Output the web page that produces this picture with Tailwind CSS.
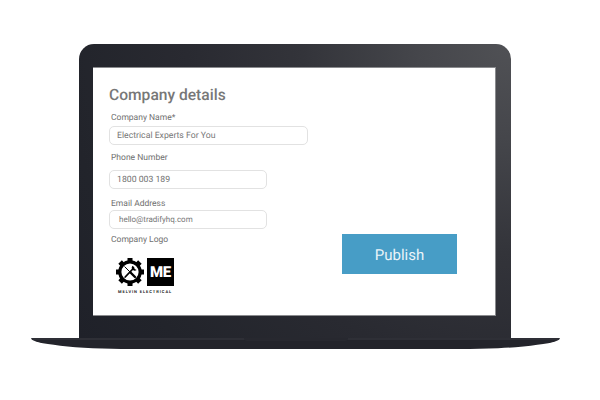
<!DOCTYPE html>
<html lang="en">
<head>
  <meta charset="UTF-8">
  <title>Company details</title>
  <script src="https://cdn.jsdelivr.net/npm/@tailwindcss/browser@4"></script>
</head>
<body class="bg-white">
  <div class="w-[600px] h-[400px] overflow-hidden bg-white pt-[44px] pl-[31px] font-['Roboto',sans-serif] [text-rendering:geometricPrecision]">
    <!-- laptop lid -->
    <div class="ml-[48px] w-[432px] h-[294px] rounded-t-[15px] pt-[23px] pl-[14px] bg-[radial-gradient(circle_at_100%_0%,#505155_0%,#45464b_18%,#33343a_40%,#292a31_62%,#22242b_85%,#1f2129_100%)]">
      <div class="w-[403px] h-[249px] bg-white border-t border-b border-r border-[#8a8b8e] flex">
        <!-- form -->
        <div class="w-[249px] pl-[16px] pt-[17px] shrink-0">
          <h1 class="text-[15.6px] leading-[20px] font-medium text-[#777]">Company details</h1>
          <p class="mt-[7px] ml-[2px] text-[8.5px] leading-[12px] text-[#6f6f6f]">Company Name*</p>
          <div class="mt-[2px] w-[199px] h-[19px] rounded-[5px] border border-[#e2e2e2] pl-[7px] text-[8.7px] leading-[18px] text-[#777]">Electrical Experts For You</div>
          <p class="mt-[7px] ml-[2px] text-[8.5px] leading-[12px] text-[#6f6f6f]">Phone Number</p>
          <div class="mt-[6px] w-[158px] h-[19px] rounded-[5px] border border-[#e2e2e2] pl-[7px] text-[8.7px] leading-[19px] text-[#6f6f6f]">1800 003 189</div>
          <p class="mt-[9px] ml-[2px] text-[8.5px] leading-[12px] text-[#6f6f6f]">Email Address</p>
          <div class="w-[158px] h-[19px] rounded-[5px] border border-[#e2e2e2] pl-[9px] text-[8px] leading-[18px] text-[#777]">hello@tradifyhq.com</div>
          <p class="mt-[5px] ml-[2px] text-[8.5px] leading-[12px] text-[#6f6f6f]">Company Logo</p>
          <!-- logo -->
          <div class="mt-[12px] ml-[7px] w-[58px]">
            <div class="flex items-start gap-[3px]">
              <svg width="28" height="28" viewBox="0 0 28 28" class="shrink-0">
                <circle cx="14" cy="14" r="10.2" fill="none" stroke="#000" stroke-width="3.2"/>
                <g stroke="#000" stroke-width="5">
                  <path d="M14 0v4M14 24v4M0 14h4M24 14h4M4.1 4.1l2.8 2.8M21.1 21.1l2.8 2.8M23.9 4.1l-2.8 2.8M6.9 21.1l-2.8 2.8"/>
                </g>
                <!-- screwdriver -->
                <path d="M8.5 8.5l6 6" stroke="#000" stroke-width="1"/>
                <path d="M14.5 14.5l4.5 4.5" stroke="#000" stroke-width="2.4" stroke-linecap="round"/>
                <!-- wrench -->
                <path d="M9.2 19l7.6-8" stroke="#000" stroke-width="1.8" stroke-linecap="round"/>
                <path d="M16.4 7.8a3 3 0 0 0 .3 4a3 3 0 0 0 4 .2l-2-1.1l-.6-2z" fill="#000"/>
              </svg>
              <div class="w-[27px] h-[28px] bg-black flex items-center justify-center text-white text-[15px] leading-none font-black tracking-[-0.3px]">ME</div>
            </div>
            <p class="mt-[3px] ml-[2px] whitespace-nowrap text-[4px] leading-[5px] font-bold tracking-[0.95px] text-[#222]">MELVIN ELECTRICAL</p>
          </div>
        </div>
        <!-- publish -->
        <div class="pt-[166px]">
          <div class="w-[115px] h-[40px] bg-[#479dc6] text-[#eaf4f9] text-[15px] leading-[42px] text-center">Publish</div>
        </div>
      </div>
    </div>
    <!-- laptop base -->
    <div class="w-[529px] h-[11px] rounded-b-[100px_11px] bg-[#23242b] border-t-2 border-[#2e2f36] flex justify-center">
      <div class="-mt-[2px] w-[104px] h-[3px] rounded-b-[4px] bg-[#27282f]"></div>
    </div>
  </div>
</body>
</html>
